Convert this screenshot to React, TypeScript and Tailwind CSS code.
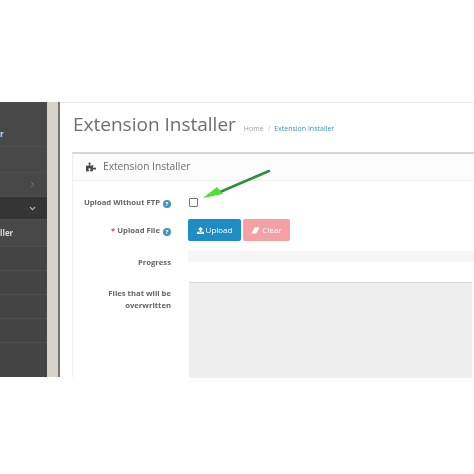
import { FaUpload, FaPuzzlePiece } from "react-icons/fa";
import { ChevronRight, ChevronDown } from "lucide-react";

const font = { fontFamily: '"Open Sans", sans-serif' };

const HelpDot = () => (
  <span className="ml-[3px] inline-flex h-[8px] w-[8px] items-center justify-center rounded-full bg-[#3f93c4] align-[-1px] text-[6px] font-bold leading-none text-white">
    ?
  </span>
);

const SideRow = ({ children, className }: { children?: React.ReactNode; className: string }) => (
  <div className={`flex items-center border-b border-[#4e4e4e] text-[8px] font-bold text-[#d8d8d8] ${className}`}>
    {children}
  </div>
);

const Label = ({ children }: { children: React.ReactNode }) => (
  <div className="w-[98px] shrink-0 text-right text-[7.7px] font-bold leading-[12px] text-[#666666]">{children}</div>
);

const App = () => {
  return (
    <div className="relative h-[474px] w-[474px] overflow-hidden bg-white pt-[102px]" style={font}>
      <div className="flex h-[275px] blur-[0.6px]">
        <div className="flex w-[47px] shrink-0 flex-col bg-[#484848]">
          <div className="h-[19px]" />
          <SideRow className="h-[26px]">r</SideRow>
          <SideRow className="h-[26px]" />
          <SideRow className="h-[24px] justify-end">
            <ChevronRight size={9} className="mr-[10px] text-[#8f8f8f]" />
          </SideRow>
          <SideRow className="h-[23px] justify-end bg-[#353535]">
            <ChevronDown size={9} strokeWidth={3} className="mr-[10px] text-[#bdbdbd]" />
          </SideRow>
          <SideRow className="h-[27px]">ller</SideRow>
          <SideRow className="h-[24px] bg-[#444444]" />
          <SideRow className="h-[24px] bg-[#444444]" />
          <SideRow className="h-[24px] bg-[#444444]" />
          <SideRow className="h-[24px] bg-[#444444]" />
          <div className="flex-1 bg-[#444444]" />
        </div>
        <div className="w-[13px] shrink-0 border-r-2 border-[#77736d] bg-[#d6d1c9]" />
        <div className="flex-1 border-t border-[#eeeeee] pl-[12px] pt-[6px]">
          <div className="ml-[1px] flex h-[30px] items-baseline">
            <h1 className="text-[19px] leading-[30px] text-[#6e6e6e]">Extension Installer</h1>
            <span className="ml-[8px] text-[7px] text-[#a0a0a0]">Home</span>
            <span className="mx-[4px] text-[7px] text-[#c5c5c5]">/</span>
            <span className="text-[7px] text-[#3f95c4]">Extension Installer</span>
          </div>
          <div className="mt-[13px] h-[225px] border-l border-t-2 border-[#d6d6d6] border-l-[#eeeeee]">
            <div className="flex h-[27px] items-center border-b border-[#eeeeee] bg-[#fcfcfc] pl-[13px] text-[10.2px] text-[#6e6e6e]">
              <FaPuzzlePiece size={10} className="text-[#4a4a4a]" />
              <span className="ml-[7px]">Extension Installer</span>
            </div>
            <div className="flex items-center whitespace-nowrap pr-[2px] pt-[15px]">
              <Label>
                Upload Without FTP
                <HelpDot />
              </Label>
              <div className="ml-[18px] h-[9px] w-[9px] rounded-[1px] border border-[#777777] bg-white" />
            </div>
            <div className="mt-[11px] flex items-center whitespace-nowrap">
              <Label>
                <span className="text-[#d43f5a]">* </span>Upload File
                <HelpDot />
              </Label>
              <button className="ml-[17px] flex h-[22px] w-[53px] items-center justify-center gap-[2px] rounded-[2px] bg-[#1f8cc6] text-[8px] text-white">
                <FaUpload size={7} />
                Upload
              </button>
              <button className="ml-[2px] flex h-[22px] w-[47px] items-center justify-center gap-[2px] rounded-[2px] bg-[#f5a0a5] text-[8px] text-white">
                <svg width="9" height="7" viewBox="0 0 9 7">
                  <path d="M3.6 0.5 H8.6 L5.2 6.5 H0.4 Z" fill="white" />
                </svg>
                Clear
              </button>
            </div>
            <div className="mt-[10px] flex">
              <Label>
                <span className="relative top-[5px]">Progress</span>
              </Label>
              <div className="ml-[17px] h-[11px] flex-1 bg-[#f5f5f5]" />
            </div>
            <div className="mt-[19px] flex pr-[2px]">
              <Label>
                <span className="relative top-[5px]">Files that will be overwritten</span>
              </Label>
              <div className="ml-[18px] h-[96px] flex-1 border-t border-[#d9d9d9] bg-[#eeeeee]" />
            </div>
          </div>
        </div>
      </div>
      <svg className="absolute left-[200px] top-[165px]" width="74" height="40" viewBox="0 0 74 40">
        <path d="M69 6 L20 27" stroke="#2f8f3f" strokeWidth="2.6" strokeLinecap="round" />
        <path d="M3 33 L17 22 L23 29 Z" fill="#4de03a" />
      </svg>
    </div>
  );
};

export default App;
